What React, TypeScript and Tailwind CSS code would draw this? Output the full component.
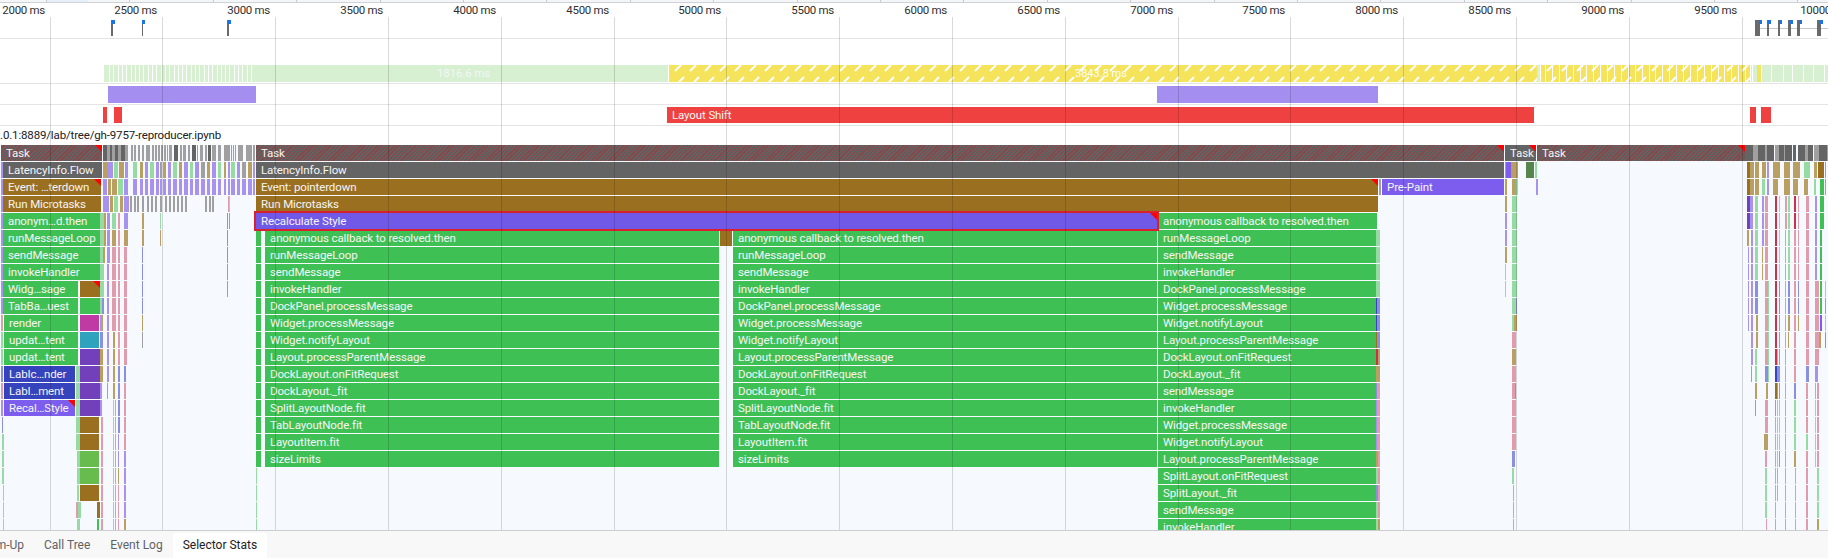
const colors = {
  brown: "bg-[#9a7020]",
  tan: "bg-[#b99f62]",
  green: "bg-[#3fc055]",
  lgreen: "bg-[#96dba4]",
  purple: "bg-[#7d5ded]",
  recalc: "bg-[#7159e8]",
  lpurple: "bg-[#a792ee]",
  pink: "bg-[#e09cac]",
  blue: "bg-[#8b90dc]",
  dark: "bg-[#646464]",
  gray: "bg-[#a0a0a0]",
  magenta: "bg-[#c03aa4]",
  teal: "bg-[#2fa2be]",
  violet: "bg-[#7240bb]",
  indigo: "bg-[#3543bd]",
  lime: "bg-[#68bc4e]",
  crimson: "bg-[#c8324a]",
  forest: "bg-[#54854a]",
  hatch: "bg-[repeating-linear-gradient(135deg,#666060_0,#666060_2px,#8d4446_2px,#8d4446_3px)]",
  white: "bg-white",
  frame: "bg-[#d7f0d1]",
  yellow: "bg-[#f4e35b]",
  interaction: "bg-[#a48ff0]",
  shift: "bg-[#ef4240]",
  clear: "bg-transparent",
}
type Color = keyof typeof colors

type Bar = { r: number; x: number; w: number; c: Color; label?: string; corner?: boolean }

const bar = (r: number, x: number, end: number, c: Color, label?: string, corner?: boolean): Bar => ({
  r,
  x,
  w: end - x,
  c,
  label,
  corner,
})

// stripes that stay in the same place over several rows: x, width, colour, first row, last row
const runs: [number, number, Color, number, number][] = [
  // left edge
  [1, 2, "lpurple", 1, 9],
  [1, 2, "pink", 10, 10],
  [1, 2, "lgreen", 11, 12],
  [1, 2, "blue", 13, 13],
  [1, 2, "pink", 14, 14],
  [1, 2, "lpurple", 15, 15],
  [2, 1, "blue", 16, 16],
  [2, 2, "lgreen", 17, 19],
  [3, 1, "lgreen", 20, 22],
  // stack next to the long left bars
  [100, 4, "lgreen", 4, 8],
  [100, 2, "lgreen", 9, 9],
  [102, 2, "blue", 9, 9],
  [100, 3, "lpurple", 10, 10],
  [102, 1, "tan", 10, 10],
  [100, 3, "blue", 11, 11],
  [100, 3, "tan", 12, 13],
  [100, 2, "lpurple", 14, 15],
  [101, 2, "pink", 16, 22],
  [104, 2, "tan", 4, 5],
  [103, 2, "tan", 6, 6],
  [107, 3, "lpurple", 4, 6],
  [107, 2, "lpurple", 7, 13],
  [107, 1, "lpurple", 14, 14],
  [112, 4, "lgreen", 4, 4],
  [112, 4, "tan", 5, 5],
  [112, 4, "pink", 6, 10],
  [113, 2, "tan", 11, 14],
  [113, 1, "lgreen", 15, 22],
  [115, 1, "pink", 15, 22],
  [118, 2, "pink", 4, 12],
  [118, 2, "blue", 13, 16],
  [118, 1, "lpurple", 17, 18],
  [118, 1, "tan", 19, 19],
  [118, 1, "pink", 20, 22],
  [124, 4, "lpurple", 4, 4],
  [124, 4, "tan", 5, 5],
  [124, 3, "pink", 6, 12],
  [124, 2, "blue", 13, 13],
  [124, 2, "pink", 14, 17],
  [124, 2, "lpurple", 18, 21],
  [124, 2, "tan", 22, 22],
  [142, 2, "tan", 4, 5],
  [142, 1, "blue", 6, 9],
  [142, 1, "tan", 10, 10],
  [142, 1, "gray", 11, 11],
  [160, 1, "lgreen", 4, 4],
  [160, 1, "tan", 5, 5],
  [227, 1, "blue", 4, 6],
  [229, 1, "tan", 4, 4],
  [227, 1, "tan", 7, 8],
  // left of the first long task block
  [256, 1, "lgreen", 19, 22],
  // strip at the end of the long right stack
  [1376, 4, "lgreen", 5, 8],
  [1376, 1, "indigo", 9, 10],
  [1377, 3, "blue", 9, 10],
  [1376, 1, "brown", 11, 11],
  [1377, 3, "blue", 11, 11],
  [1376, 2, "crimson", 12, 12],
  [1378, 2, "tan", 12, 12],
  [1376, 4, "tan", 13, 13],
  [1376, 1, "blue", 14, 14],
  [1377, 3, "pink", 14, 17],
  [1376, 1, "lpurple", 15, 17],
  [1376, 2, "tan", 18, 18],
  [1378, 2, "pink", 18, 18],
  [1376, 2, "lgreen", 19, 19],
  [1378, 2, "pink", 19, 19],
  [1376, 2, "blue", 20, 20],
  [1378, 2, "pink", 20, 20],
  [1376, 2, "lgreen", 21, 21],
  [1378, 2, "pink", 21, 21],
  [1376, 2, "lgreen", 22, 22],
  [1378, 2, "tan", 22, 22],
  // block around 8600 ms
  [1505, 2, "tan", 2, 3],
  [1505, 2, "lpurple", 4, 5],
  [1505, 2, "tan", 6, 6],
  [1505, 1, "lgreen", 7, 8],
  [1512, 4, "tan", 2, 2],
  [1516, 2, "lgreen", 2, 2],
  [1512, 5, "lgreen", 3, 9],
  [1516, 1, "blue", 9, 9],
  [1512, 2, "lgreen", 10, 10],
  [1514, 3, "tan", 10, 10],
  [1512, 4, "pink", 11, 11],
  [1512, 4, "tan", 12, 12],
  [1512, 4, "pink", 13, 13],
  [1512, 3, "pink", 14, 14],
  [1515, 1, "blue", 14, 14],
  [1512, 4, "pink", 15, 17],
  [1512, 3, "blue", 18, 18],
  [1512, 2, "lgreen", 19, 19],
  [1513, 1, "pink", 20, 22],
  [1536, 2, "lpurple", 2, 2],
  // cluster on the right
  [1747, 3, "brown", 1, 2],
  [1750, 4, "tan", 1, 2],
  [1747, 3, "violet", 3, 4],
  [1750, 3, "lpurple", 3, 4],
  [1747, 2, "tan", 5, 5],
  [1748, 1, "lpurple", 6, 10],
  [1751, 2, "lpurple", 5, 12],
  [1751, 1, "lpurple", 13, 13],
  [1755, 4, "tan", 1, 2],
  [1755, 3, "lgreen", 3, 7],
  [1755, 3, "blue", 8, 9],
  [1756, 2, "tan", 10, 11],
  [1755, 2, "lgreen", 12, 13],
  [1755, 2, "tan", 14, 14],
  [1755, 1, "tan", 15, 15],
  [1762, 4, "tan", 1, 1],
  [1762, 3, "lgreen", 2, 2],
  [1762, 2, "lpurple", 3, 5],
  [1762, 1, "tan", 6, 7],
  [1765, 3, "pink", 3, 12],
  [1765, 3, "blue", 13, 13],
  [1766, 2, "tan", 14, 15],
  [1765, 3, "pink", 15, 16],
  [1764, 4, "tan", 17, 17],
  [1765, 2, "pink", 18, 18],
  [1765, 2, "lgreen", 19, 21],
  [1766, 1, "pink", 22, 22],
  [1767, 2, "lpurple", 1, 2],
  [1768, 1, "lgreen", 8, 13],
  [1773, 7, "tan", 1, 1],
  [1773, 5, "tan", 2, 2],
  [1775, 2, "crimson", 3, 12],
  [1775, 2, "indigo", 13, 13],
  [1775, 2, "brown", 14, 14],
  [1775, 1, "gray", 15, 15],
  [1775, 1, "pink", 16, 22],
  [1777, 1, "pink", 12, 12],
  [1777, 2, "blue", 13, 13],
  [1777, 1, "tan", 14, 14],
  [1777, 1, "lgreen", 15, 18],
  [1777, 1, "pink", 19, 20],
  [1779, 1, "lgreen", 3, 7],
  [1779, 1, "blue", 8, 9],
  [1779, 1, "tan", 10, 12],
  [1779, 1, "blue", 13, 13],
  [1779, 1, "tan", 14, 14],
  [1779, 1, "lgreen", 15, 17],
  [1779, 1, "tan", 18, 18],
  [1784, 6, "tan", 1, 2],
  [1785, 2, "pink", 3, 4],
  [1785, 1, "pink", 5, 22],
  [1788, 2, "lgreen", 3, 7],
  [1788, 2, "blue", 8, 9],
  [1788, 2, "tan", 10, 10],
  [1788, 1, "tan", 11, 11],
  [1793, 7, "tan", 1, 1],
  [1793, 5, "tan", 2, 2],
  [1794, 2, "crimson", 3, 4],
  [1794, 2, "pink", 5, 13],
  [1794, 2, "blue", 14, 14],
  [1794, 2, "lgreen", 15, 17],
  [1794, 2, "tan", 18, 18],
  [1795, 1, "pink", 19, 22],
  [1798, 1, "pink", 3, 7],
  [1798, 1, "blue", 8, 9],
  [1798, 1, "tan", 10, 10],
  [1804, 6, "lgreen", 1, 1],
  [1804, 4, "tan", 2, 2],
  [1806, 3, "pink", 3, 12],
  [1806, 3, "blue", 13, 13],
  [1806, 2, "pink", 14, 16],
  [1806, 2, "lgreen", 17, 17],
  [1806, 2, "pink", 18, 22],
  [1814, 3, "tan", 1, 1],
  [1814, 2, "lgreen", 2, 2],
  [1815, 2, "lpurple", 3, 9],
  [1815, 4, "pink", 8, 12],
  [1815, 3, "lpurple", 13, 13],
  [1815, 1, "pink", 14, 14],
  [1815, 1, "lgreen", 15, 18],
  [1817, 2, "pink", 14, 18],
  [1817, 2, "lgreen", 19, 21],
  [1817, 2, "tan", 22, 22],
  [1818, 6, "brown", 1, 1],
  [1820, 4, "green", 2, 4],
  [1820, 2, "green", 5, 9],
  [1820, 2, "purple", 10, 10],
  [1819, 2, "tan", 11, 11],
  [1825, 1, "tan", 1, 2],
  [1825, 1, "lgreen", 8, 8],
  [1825, 1, "tan", 9, 9],
  [1825, 1, "lgreen", 10, 10],
  [1825, 1, "blue", 11, 11],
]

const taskStripes: [number, number, Color][] = [
  [103, 4, "dark"], [107, 3, "gray"], [110, 2, "dark"], [112, 3, "gray"], [115, 3, "dark"], [118, 3, "gray"],
  [121, 4, "dark"], [125, 3, "gray"], [131, 2, "gray"], [134, 2, "gray"], [138, 2, "gray"], [142, 2, "gray"],
  [146, 4, "gray"], [152, 2, "gray"], [155, 2, "gray"], [158, 2, "gray"], [161, 2, "gray"], [164, 2, "gray"],
  [167, 1, "gray"], [169, 3, "gray"], [174, 4, "dark"], [180, 2, "gray"], [183, 3, "gray"], [188, 2, "gray"],
  [192, 4, "dark"], [197, 1, "gray"], [200, 3, "gray"], [205, 2, "gray"], [208, 3, "dark"], [212, 4, "gray"],
  [218, 3, "gray"], [224, 6, "gray"], [231, 1, "gray"], [233, 1, "gray"], [235, 1, "gray"], [238, 5, "gray"],
  [246, 6, "gray"], [253, 2, "gray"],
  [1745, 8, "dark"], [1753, 2, "gray"], [1755, 3, "gray"], [1758, 7, "dark"], [1765, 2, "gray"], [1767, 7, "dark"],
  [1775, 4, "gray"], [1779, 1, "dark"], [1780, 4, "dark"], [1784, 1, "gray"], [1785, 7, "dark"], [1793, 3, "dark"],
  [1798, 7, "dark"], [1805, 3, "gray"], [1808, 5, "dark"], [1814, 5, "gray"], [1819, 8, "dark"], [1827, 1, "gray"],
]

const purpleBars: [number, number][] = [
  [133, 4], [140, 3], [145, 3], [150, 4], [156, 3], [160, 2], [163, 3], [168, 3], [173, 4], [179, 3], [184, 4],
  [190, 3], [195, 4], [201, 4], [207, 3], [212, 4], [218, 3], [224, 2], [228, 2], [231, 4], [237, 3], [242, 4],
  [248, 4], [253, 2],
]
const latencyCycle: Color[] = ["lgreen", "tan", "lpurple", "lgreen", "lpurple", "gray", "tan", "lpurple"]

const grayBars = [130, 134, 137, 142, 147, 151, 155, 160, 165, 169, 173, 177, 181, 185, 205, 209, 212]

const labelled: Bar[] = [
  bar(0, 1, 102, "hatch", "Task", true),
  bar(0, 256, 1504, "hatch", "Task", true),
  bar(0, 1505, 1536, "dark", "Task", true),
  bar(0, 1537, 1745, "hatch", "Task", true),
  bar(1, 3, 102, "dark", "LatencyInfo.Flow"),
  bar(1, 256, 1504, "dark", "LatencyInfo.Flow"),
  bar(2, 3, 101, "brown", "Event: …terdown", true),
  bar(2, 256, 1378, "brown", "Event: pointerdown", true),
  bar(2, 1382, 1504, "purple", "Pre-Paint"),
  bar(3, 3, 101, "brown", "Run Microtasks"),
  bar(3, 256, 1378, "brown", "Run Microtasks"),
  bar(4, 3, 100, "green", "anonym…d.then"),
  bar(5, 3, 100, "green", "runMessageLoop"),
  bar(6, 3, 100, "green", "sendMessage"),
  bar(7, 3, 100, "green", "invokeHandler"),
  bar(8, 3, 78, "green", "Widg…sage"),
  bar(9, 3, 78, "green", "TabBa…uest"),
  bar(10, 4, 78, "green", "render"),
  bar(11, 4, 78, "green", "updat…tent"),
  bar(12, 4, 78, "green", "updat…tent"),
  bar(13, 4, 75, "indigo", "LabIc…nder"),
  bar(14, 4, 75, "indigo", "LabI…ment"),
  bar(15, 4, 75, "purple", "Recal…Style", true),
  bar(8, 80, 100, "brown", undefined, true),
  bar(9, 80, 100, "green"),
  bar(10, 80, 99, "magenta"),
  bar(11, 80, 99, "teal"),
  bar(12, 80, 100, "violet"),
  bar(13, 80, 100, "violet"),
  bar(14, 80, 100, "violet"),
  bar(15, 80, 100, "violet"),
  bar(16, 80, 99, "brown"),
  bar(17, 80, 99, "brown"),
  bar(18, 80, 99, "lime"),
  bar(19, 80, 99, "lime"),
  bar(20, 80, 99, "brown"),
  bar(21, 97, 100, "brown"),
  bar(22, 97, 99, "green"),
  bar(13, 76, 80, "lgreen"),
  bar(14, 76, 80, "lgreen"),
  bar(15, 76, 80, "lgreen"),
  bar(16, 76, 80, "lgreen"),
  bar(17, 76, 80, "lgreen"),
  bar(18, 77, 80, "lgreen"),
  bar(19, 77, 80, "lgreen"),
  bar(20, 77, 79, "lgreen"),
  bar(21, 76, 78, "pink"),
  bar(21, 78, 81, "lgreen"),
  bar(22, 77, 80, "lgreen"),
  bar(5, 720, 732, "brown"),
  bar(1, 1505, 1506, "gray"),
  bar(1, 1506, 1511, "purple"),
  bar(1, 1511, 1515, "tan"),
  bar(1, 1515, 1518, "tan"),
  bar(1, 1526, 1534, "forest"),
  bar(1, 1535, 1537, "lgreen"),
  bar(2, 1379, 1381, "gray"),
]

const firstStack = [
  "anonymous callback to resolved.then",
  "runMessageLoop",
  "sendMessage",
  "invokeHandler",
  "DockPanel.processMessage",
  "Widget.processMessage",
  "Widget.notifyLayout",
  "Layout.processParentMessage",
  "DockLayout.onFitRequest",
  "DockLayout._fit",
  "SplitLayoutNode.fit",
  "TabLayoutNode.fit",
  "LayoutItem.fit",
  "sizeLimits",
]

const lastStack = [
  "anonymous callback to resolved.then",
  "runMessageLoop",
  "sendMessage",
  "invokeHandler",
  "DockPanel.processMessage",
  "Widget.processMessage",
  "Widget.notifyLayout",
  "Layout.processParentMessage",
  "DockLayout.onFitRequest",
  "DockLayout._fit",
  "sendMessage",
  "invokeHandler",
  "Widget.processMessage",
  "Widget.notifyLayout",
  "Layout.processParentMessage",
  "SplitLayout.onFitRequest",
  "SplitLayout._fit",
  "sendMessage",
  "invokeHandler",
]

const allBars: Bar[] = [
  ...labelled,
  ...runs.flatMap(([x, w, c, r0, r1]) =>
    Array.from({ length: r1 - r0 + 1 }, (_, i) => ({ r: r0 + i, x, w, c })),
  ),
  ...taskStripes.map(([x, w, c]) => ({ r: 0, x, w, c })),
  ...purpleBars.map(([x, w]) => ({ r: 2, x, w, c: "lpurple" as Color })),
  ...purpleBars.map(([x, w], i) => ({ r: 1, x, w, c: latencyCycle[i % latencyCycle.length] })),
  ...grayBars.map((x) => ({ r: 3, x, w: 1.5, c: "gray" as Color })),
  { r: 1, x: 103, w: 5, c: "tan" },
  { r: 1, x: 108, w: 5, c: "lpurple" },
  { r: 1, x: 114, w: 4, c: "lgreen" },
  { r: 1, x: 119, w: 5, c: "tan" },
  { r: 1, x: 125, w: 3, c: "lpurple" },
  { r: 2, x: 103, w: 4, c: "lpurple" },
  { r: 2, x: 108, w: 3, c: "tan" },
  { r: 2, x: 112, w: 5, c: "tan" },
  { r: 2, x: 118, w: 5, c: "lgreen" },
  { r: 2, x: 124, w: 4, c: "lpurple" },
  { r: 3, x: 103, w: 6, c: "lpurple" },
  { r: 3, x: 110, w: 3, c: "tan" },
  { r: 3, x: 114, w: 4, c: "lgreen" },
  { r: 3, x: 120, w: 3, c: "tan" },
  { r: 3, x: 124, w: 5, c: "lpurple" },
  { r: 3, x: 228, w: 1, c: "pink" },
  { r: 3, x: 229, w: 1, c: "lgreen" },
  ...firstStack.flatMap((label, i) => [
    bar(5 + i, 256, 261, "green"),
    bar(5 + i, 265, 719, "green", label),
    bar(5 + i, 733, 1157, "green", label),
  ]),
  ...lastStack.map((label, i) => bar(4 + i, 1158, i === 0 ? 1377 : 1376, "green", label)),
]

const rows = Array.from({ length: 23 }, (_, r) => allBars.filter((b) => b.r === r))

const grid = Array.from({ length: 17 }, (_, i) => ({ ms: 2000 + i * 500, x: Math.round(49.5 + i * 112.8) }))
const ticks = Array.from({ length: 22 }, (_, i) => Math.round(46 + i * 83.4))

const marks: [number, number][] = [
  [111, 2],
  [142, 1],
  [227, 2],
  [1755, 5],
  [1767, 2],
  [1778, 2],
  [1788, 3],
  [1797, 3],
  [1817, 4],
]

const gapBars = (xs: number[]): Bar[] => xs.map((x) => ({ r: 0, x, w: 1, c: "white" as Color }))

const frameBars: Bar[] = [
  bar(0, 104, 668, "frame"),
  ...gapBars(Array.from({ length: 34 }, (_, i) => Math.round(109 + i * 4.3))),
  { r: 0, x: 432, w: 60, c: "clear", label: "1816.6 ms" },
  bar(0, 1537, 1540, "frame"),
  bar(0, 1751, 1757, "frame"),
  bar(0, 1757, 1761, "yellow"),
  bar(0, 1762, 1828, "frame"),
  ...gapBars([1771, 1783, 1792, 1803, 1813, 1824]),
]
const yellowGaps = gapBars(Array.from({ length: 31 }, (_, i) => Math.round(1545 + i * 6.9)))
const interactionBars = [bar(0, 108, 256, "interaction"), bar(0, 1157, 1378, "interaction")]
const shiftBars = [
  bar(0, 103, 107, "shift"),
  bar(0, 114, 122, "shift"),
  bar(0, 667, 1534, "shift", "Layout Shift"),
  bar(0, 1750, 1756, "shift"),
  bar(0, 1761, 1771, "shift"),
]

function FlameBar({ b }: { b: Bar }) {
  return (
    <div
      className={`absolute top-0 h-full overflow-hidden whitespace-nowrap ${b.label ? "pl-[5px]" : ""} text-[11.5px] leading-[16px] tracking-[-0.12px] text-[#f5f5f5] ${colors[b.c]}`}
      style={{ left: b.x, width: b.w }}
    >
      {b.label}
      {b.corner && (
        <span className="absolute right-0 top-0 h-[7px] w-[7px] bg-[#ff0000] [clip-path:polygon(0_0,100%_0,100%_100%)]" />
      )}
    </div>
  )
}

function Lane({ bars, className }: { bars: Bar[]; className: string }) {
  return (
    <div className={`relative shrink-0 ${className}`}>
      {bars.map((b, i) => (
        <FlameBar key={i} b={b} />
      ))}
    </div>
  )
}

function Hatched({ id, x, width }: { id: string; x: number; width: number }) {
  return (
    <svg className="absolute top-0 h-full" style={{ left: x, width }}>
      <defs>
        <pattern id={id} width="15" height="17" patternUnits="userSpaceOnUse">
          <rect width="15" height="17" fill="#f4e35b" />
          <path d="M12 0 L6 6 M15 12 L10 17 M0 12 L-5 17" stroke="#fff" strokeWidth="2" />
        </pattern>
      </defs>
      <rect width="100%" height="17" fill={`url(#${id})`} />
    </svg>
  )
}

export default function App() {
  return (
    <div className="relative flex h-[558px] w-[1828px] flex-col overflow-hidden bg-white font-['Roboto',sans-serif]">
      {/* time ruler and marks */}
      <div className="relative h-[39px] shrink-0 border-b border-[#e4e4e4]">
        <div className="relative h-[3px] border-b border-[#cfd3d8] bg-[#f4f5f6]">
          <div className="absolute left-[47px] top-0 h-[2px] w-[41px] bg-[#e6eef8]" />
          {ticks.map((x) => (
            <div key={x} className="absolute top-0 h-[2px] w-px bg-[#c8ccd0]" style={{ left: x }} />
          ))}
        </div>
        {grid.map((g) => (
          <span
            key={g.ms}
            className="absolute top-[3px] -translate-x-full whitespace-nowrap bg-white text-[11.5px] leading-[14px] tracking-[-0.3px] text-[#303030]"
            style={{ left: g.x - 5 }}
          >
            {g.ms} ms
          </span>
        ))}
        <div className="absolute left-[1755px] right-0 top-[28px] h-px bg-[#c8c8c8]" />
        {marks.map(([x, w]) => (
          <div key={x} className="absolute top-[20px] h-[16px]" style={{ left: x }}>
            <div className="h-full bg-[#6a6a6a]" style={{ width: w }} />
            <div className="absolute top-0 h-[4px] w-[3px] bg-[#1a73e8]" style={{ left: w - 1 }} />
          </div>
        ))}
      </div>

      {/* frames */}
      <div className="h-[45px] shrink-0 border-b border-[#e4e4e4] pt-[26px]">
        <div className="relative h-[17px]">
          <Lane bars={frameBars} className="h-[17px]" />
          <Hatched id="long-frame" x={669} width={868} />
          <Hatched id="short-frames" x={1541} width={209} />
          <div className="absolute inset-0">
            <Lane bars={yellowGaps} className="h-[17px]" />
          </div>
          <span className="absolute left-[1075px] top-0 text-[11px] leading-[17px] text-white">3843.8 ms</span>
        </div>
      </div>

      {/* interactions */}
      <div className="h-[21px] shrink-0 border-b border-[#e4e4e4] pt-[2px]">
        <Lane bars={interactionBars} className="h-[17px]" />
      </div>

      {/* layout shifts */}
      <div className="h-[21px] shrink-0 border-b border-[#e4e4e4] pt-[2px]">
        <Lane bars={shiftBars} className="h-[16px]" />
      </div>

      {/* thread title */}
      <div className="h-[19px] shrink-0 overflow-hidden whitespace-nowrap text-[11.5px] leading-[18px] tracking-[-0.15px] text-[#202124]">
        .0.1:8889/lab/tree/gh-9757-reproducer.ipynb
      </div>

      {/* flame chart */}
      <div className="flex flex-1 flex-col gap-px overflow-hidden bg-[#f6faff]">
        {rows.map((row, r) => (
          <div key={r} className="relative h-[16px] shrink-0">
            {row.map((b, i) => (
              <FlameBar key={i} b={b} />
            ))}
            {r === 4 && (
              <div className="absolute left-[256px] top-0 z-10 h-full w-[901px] overflow-hidden bg-[#7159e8] pl-[5px] text-[11.5px] leading-[16px] tracking-[-0.12px] text-[#f5f5f5] outline-2 outline-[#d9202d]">
                Recalculate Style
                <span className="absolute right-0 top-0 h-[7px] w-[7px] bg-[#ff0000] [clip-path:polygon(0_0,100%_0,100%_100%)]" />
              </div>
            )}
          </div>
        ))}
      </div>

      {/* details tabs */}
      <div className="flex h-[28px] shrink-0 items-end border-t border-[#cbcdd1] bg-[#f8f8f8] text-[12px] leading-[25px] text-[#5f6368]">
        <div className="flex h-[25px] w-[34px] justify-end overflow-hidden pr-[10px] whitespace-nowrap">
          <span>Bottom-Up</span>
        </div>
        <div className="h-[25px] px-[10px]">Call Tree</div>
        <div className="h-[25px] px-[10px]">Event Log</div>
        <div className="h-[25px] rounded-t-[3px] bg-white px-[10px] text-[#202124]">Selector Stats</div>
      </div>

      {/* time grid */}
      {grid.map((g) => (
        <div
          key={g.ms}
          className="pointer-events-none absolute top-[17px] z-20 h-[513px] w-px bg-black/15"
          style={{ left: g.x }}
        />
      ))}
    </div>
  )
}
